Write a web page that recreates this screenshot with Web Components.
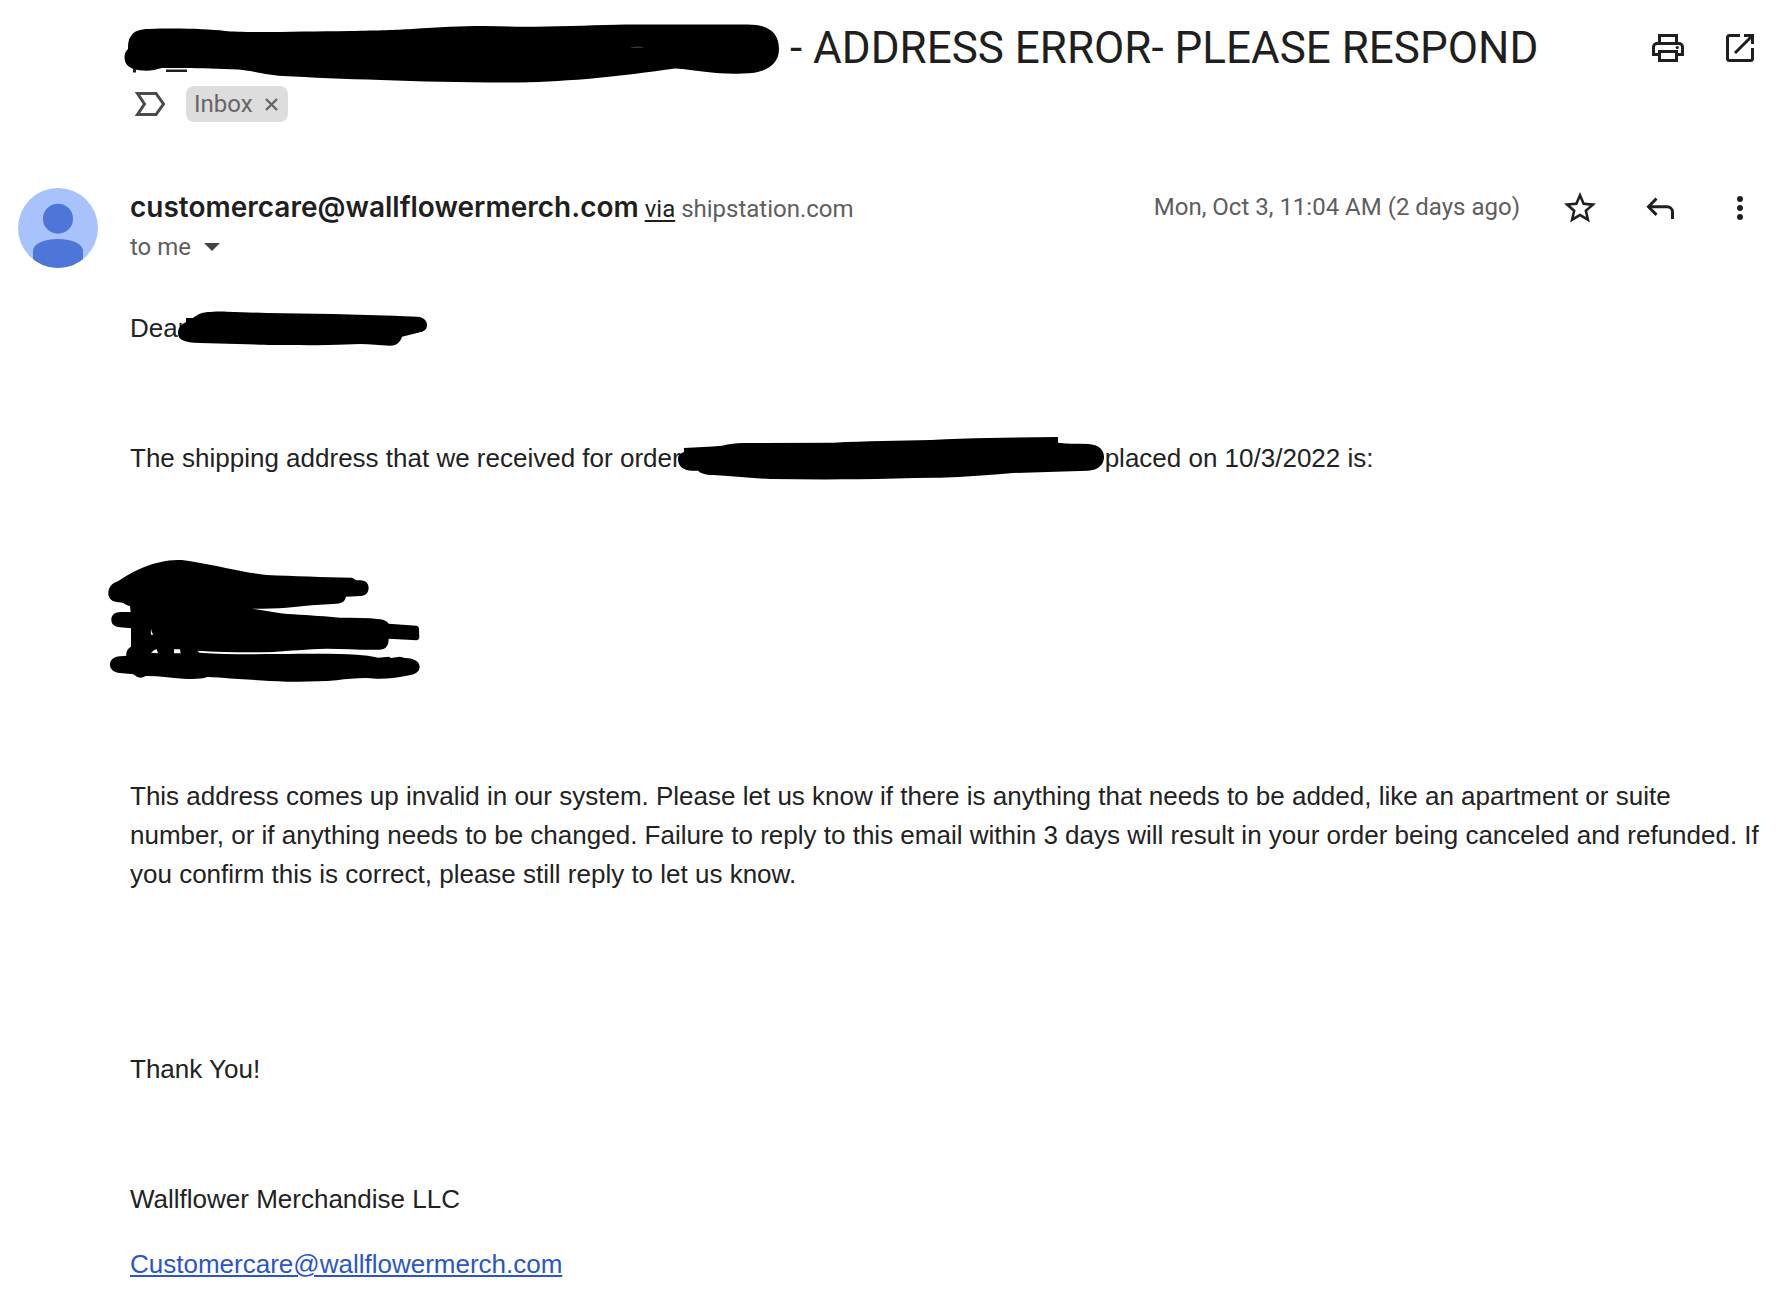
<!DOCTYPE html>
<html lang="en">
<head>
    <meta charset="utf-8">
    <meta name="viewport" content="width=device-width, initial-scale=1">
    <title>ADDRESS ERROR- PLEASE RESPOND</title>
    <style>
        body {
            margin: 0;
            background: #fff;
            color: #1f1f1f;
            font-family: Roboto, sans-serif;
        }
    </style>
</head>
<body>
    <mail-message>
        <mail-subject slot="subject">
            <redaction-mark shape="subject"></redaction-mark>- ADDRESS ERROR- PLEASE RESPOND
            <icon-button slot="actions" icon="print" label="Print all"></icon-button>
            <icon-button slot="actions" icon="open" label="In new window"></icon-button>
            <mail-label slot="labels">Inbox</mail-label>
        </mail-subject>

        <mail-sender slot="sender">
            <span slot="name">customercare@wallflowermerch.com</span>
            <span slot="domain">shipstation.com</span>
            <span slot="date">Mon, Oct 3, 11:04 AM (2 days ago)</span>
            <icon-button slot="actions" icon="star" label="Not starred"></icon-button>
            <icon-button slot="actions" icon="reply" label="Reply"></icon-button>
            <icon-button slot="actions" icon="more" label="More"></icon-button>
        </mail-sender>

        <mail-body></mail-body>
    </mail-message>

    <script>
        const ICONS = {
            print: `<g fill="none" stroke="currentColor" stroke-width="3">
                    <path d="M11.5 15V7.5h17V15"/>
                    <path d="M11.5 26.5h-6V19a3.5 3.5 0 0 1 3.5-3.5h22a3.5 3.5 0 0 1 3.5 3.5v7.5h-6"/>
                    <path d="M11.5 23.5h17v9h-17z"/>
                </g>
                <circle cx="29.3" cy="19.5" r="1.6"/>`,
            open: `<g fill="none" stroke="currentColor" stroke-width="3">
                    <path d="M20 7.5H9.5a2 2 0 0 0-2 2v21a2 2 0 0 0 2 2h21a2 2 0 0 0 2-2V20"/>
                    <path d="M24 7.5h8.5V16"/>
                    <path d="M15 25 32 8"/>
                </g>`,
            star: `<path transform="translate(.8 .8) scale(1.6)" d="M22 9.24l-7.19-.62L12 2 9.19 8.63 2 9.24l5.46 4.73L5.82 21 12 17.27 18.18 21l-1.63-7.03L22 9.24zM12 15.4l-3.76 2.27 1-4.28-3.32-2.88 4.38-.38L12 6.1l1.71 4.04 4.38.38-3.32 2.88 1 4.28L12 15.4z"/>`,
            reply: `<g fill="none" stroke="currentColor" stroke-width="3">
                    <path d="M16.5 10.5l-8 8.2 8 8.2"/>
                    <path d="M8.5 18.7h18.5a5.5 5.5 0 0 1 5.5 5.5V31"/>
                </g>`,
            more: `<circle cx="20" cy="11" r="3"/><circle cx="20" cy="20" r="3"/><circle cx="20" cy="29" r="3"/>`
        };

        // Marker strokes. origin is the pen position on the text baseline,
        // width is the room the stroke takes up in the line.
        const STROKES = {
            subject: {
                origin: [130, 63],
                width: 660,
                paths: `<path d="M131 36C134 31 140 29 149 29C180 28 207 29 225 31C245 33 300 31.500 350 31C380 30.500 395 30 412 29C440 27 460 26 484 26C505 26.500 525 27 546 26.500C580 26 610 24.500 636 24.500H747C768 24.500 779 32 779 49C779 65 765 73.500 743 73.500C730 74 719 73.500 707 72C695 71 685 69 675 68.500C650 72 620 76 587 79C560 81 535 82.500 506 82.500C460 82.500 420 81.500 381 80C345 79 310 77.500 283 76C265 75 255 71 238 69.500C220 68.500 200 68.500 185 68H162C155 70 150 71 142 70.500C130 70 124.500 65 124.500 57C124.500 53 126 51 128 49C128 43 128.500 39 131 36Z"/>
                    <path fill="#1f1f1f" d="M166 69.500h21v2.500h-21zM133 69h3v3.500h-3z"/>
                    <path fill="#444" d="M631 47.200q6-1 12-.3v.8q-6 .3-12 0z"/>`
            },
            greeting: {
                origin: [186, 337],
                width: 240,
                paths: `<path d="M178 333C178 328 181 325 186 322V318H193C198 314 203 312 210 312C217 311.500 222 311.500 227 311.700L267 313L333 314L393 315.700L417 316.700C424 317 427 321 427 325C427 330 423 332 418 332.700L402 336.700C400 343 396 345.700 390 345.700C380 345.500 370 344 360 344C340 345 320 345.500 300 345C285 345 270 345 260 344.700L200 343C192 343 186 342 182 340C179 338 178 336 178 333Z"/>`
            },
            order: {
                origin: [681, 468],
                width: 424,
                paths: `<path d="M678 460C678 456 681 454 684 453V449C697 448 710 448 722 446.700C730 445 736 444 742 444L834 443.700C865 442 900 441.500 931 441C950 440 970 439 989 439L1058 438V443.700C1068 445 1078 444.500 1088 445C1099 445.500 1104 451 1104 458C1104 466 1098 471 1088 471.700L1013 474C990 476 965 478 940 478.700C912 478.500 885 480 858 480.300C830 480.500 800 480.500 771 480C750 479 730 477 713 476C705 476 700 474 698 471.700H692C683 471.700 678 467 678 460Z"/>`
            },
            // three crossed-out address lines
            address: {
                origin: [130, 597],
                width: 290,
                paths: `<g transform="translate(90 540) scale(.3333)">
                    <path d="M55 160C55 142 65 130 85 123C125 97 165 76 210 67C245 58 275 58 310 65C390 78 460 97 530 105C610 108 700 112 785 113Q793 115 798 121H812C828 121 836 132 836 144C836 157 828 168 812 168L768 170C766 183 757 190 740 191C690 193 640 198 590 203C560 205 520 206 485 206C530 212 560 220 610 223C660 226 710 230 750 233C790 234 830 232 870 238C885 240 892 245 896 251L980 257Q987 258 987 266L988 293Q987 300 980 301L896 296C896 315 890 327 870 329C820 331 770 326 710 326C650 328 600 332 550 336C470 338 390 336 322 332L328 338C400 343 480 343 560 342C660 341 740 340 800 344Q835 346 865 353L897 350 903 354 930 350 945 354C975 355 989 366 989 381C989 397 973 404 950 407C920 413 890 417 860 416C820 412 780 416 740 421C690 425 640 426 590 425C500 422 420 414 352 411C335 417 310 418 280 416C240 414 200 407 167 408Q148 420 130 403L90 399C70 397 60 387 60 374C60 360 72 349 90 349L109 347C107 335 114 325 123 320V265L90 262C73 260 64 252 64 239C64 225 75 216 92 216H122L120 199Q110 196 98 188L80 186C63 184 55 174 55 160Z"/>
                    <path fill="#fff" d="M183 266q-1 10 0 18h7q-6-8-7-18zM183 338q8-8 17-11l4 13zM252 328h18l2 12h-20z"/>
                </g>`
            }
        };

        class IconButton extends HTMLElement {
            connectedCallback() {
                this.attachShadow({ mode: 'open' });
                this.shadowRoot.innerHTML = `
                    <style>
                        :host {
                            display: block;
                            flex: none;
                        }

                        button {
                            display: block;
                            width: 40px;
                            height: 40px;
                            padding: 0;
                            border: 0;
                            background: none;
                            color: inherit;
                            cursor: pointer;
                        }

                        svg {
                            display: block;
                            fill: currentColor;
                        }
                    </style>
                    <button type="button" aria-label="${this.getAttribute('label')}">
                        <svg width="40" height="40" viewBox="0 0 40 40" aria-hidden="true">${ICONS[this.getAttribute('icon')]}</svg>
                    </button>
                `;
            }
        }

        class RedactionMark extends HTMLElement {
            connectedCallback() {
                const stroke = STROKES[this.getAttribute('shape')];
                const [x, y] = stroke.origin;
                this.attachShadow({ mode: 'open' });
                this.shadowRoot.innerHTML = `
                    <style>
                        :host {
                            display: inline-block;
                            position: relative;
                            width: ${stroke.width}px;
                            height: 0;
                        }

                        svg {
                            position: absolute;
                            top: 0;
                            left: 0;
                            overflow: visible;
                            fill: #000;
                        }
                    </style>
                    <svg width="1" height="1" aria-hidden="true">
                        <g transform="translate(${-x} ${-y})">${stroke.paths}</g>
                    </svg>
                `;
            }
        }

        class MailLabel extends HTMLElement {
            connectedCallback() {
                this.attachShadow({ mode: 'open' });
                this.shadowRoot.innerHTML = `
                    <style>
                        :host {
                            display: flex;
                            align-items: center;
                            gap: 12px;
                            height: 36px;
                            padding: 0 9px 0 8px;
                            border-radius: 8px;
                            background: #ddd;
                            color: #666;
                            font-size: 24px;
                            line-height: 36px;
                        }

                        button {
                            display: block;
                            padding: 0;
                            border: 0;
                            background: none;
                            color: inherit;
                            cursor: pointer;
                        }

                        svg {
                            display: block;
                        }
                    </style>
                    <slot></slot>
                    <button type="button" aria-label="Remove label">
                        <svg width="14" height="14" viewBox="0 0 14 14" fill="none" stroke="currentColor" stroke-width="2.4" aria-hidden="true">
                            <path d="M1 2l11 11M12 2L1 13"/>
                        </svg>
                    </button>
                `;
            }
        }

        class MailSubject extends HTMLElement {
            connectedCallback() {
                this.attachShadow({ mode: 'open' });
                this.shadowRoot.innerHTML = `
                    <style>
                        :host {
                            display: block;
                            padding: 20px 26px 0 130px;
                        }

                        .top {
                            display: flex;
                            align-items: center;
                            justify-content: space-between;
                        }

                        h1 {
                            margin: 0;
                            font-size: 44px;
                            font-weight: 400;
                            line-height: 56px;
                        }

                        .actions {
                            display: flex;
                            gap: 32px;
                        }

                        .labels {
                            display: flex;
                            align-items: center;
                            gap: 16px;
                            padding: 10px 0 0;
                        }

                        .marker {
                            display: block;
                        }
                    </style>
                    <div class="top">
                        <h1><slot></slot></h1>
                        <div class="actions"><slot name="actions"></slot></div>
                    </div>
                    <div class="labels">
                        <svg class="marker" width="40" height="36" viewBox="0 0 40 36" fill="none" stroke="#4a4a4a" stroke-width="3" aria-hidden="true">
                            <path d="M7.500 7.500H26L33.500 18 26 28.500H7.500L14.500 18z"/>
                        </svg>
                        <slot name="labels"></slot>
                    </div>
                `;
            }
        }

        class MailSender extends HTMLElement {
            connectedCallback() {
                this.attachShadow({ mode: 'open' });
                this.shadowRoot.innerHTML = `
                    <style>
                        :host {
                            display: flex;
                            gap: 32px;
                            padding: 66px 26px 0 18px;
                            color: #5e5e5e;
                            font-size: 24px;
                            line-height: 38px;
                        }

                        .avatar {
                            display: block;
                            flex: none;
                        }

                        .details {
                            flex: 1;
                        }

                        .row {
                            display: flex;
                            align-items: flex-start;
                            justify-content: space-between;
                        }

                        h3 {
                            display: inline;
                            margin: 0;
                            color: #1f1f1f;
                            font: 600 28px/38px Inter, sans-serif;
                        }

                        a {
                            color: #1f1f1f;
                            text-underline-offset: 3px;
                        }

                        .side {
                            display: flex;
                            gap: 40px;
                            color: #1f1f1f;
                        }

                        .date {
                            color: #5e5e5e;
                        }

                        .to {
                            display: flex;
                            align-items: center;
                            gap: 13px;
                            padding: 0;
                            border: 0;
                            background: none;
                            color: inherit;
                            font: inherit;
                            cursor: pointer;
                        }
                    </style>
                    <svg class="avatar" width="80" height="80" viewBox="0 0 80 80" aria-hidden="true">
                        <clipPath id="round"><circle cx="40" cy="40" r="40"/></clipPath>
                        <g clip-path="url(#round)">
                            <path fill="#a8c2fb" d="M0 0h80v80H0z"/>
                            <circle cx="40" cy="30.700" r="15" fill="#4e75d8"/>
                            <path fill="#4e75d8" d="M15 80V63C15 56 25 51 40 51s25 5 25 12v17z"/>
                        </g>
                    </svg>
                    <div class="details">
                        <div class="row">
                            <div>
                                <h3><slot name="name"></slot></h3>
                                <a href="#via">via</a>
                                <slot name="domain"></slot>
                            </div>
                            <div class="side">
                                <span class="date"><slot name="date"></slot></span>
                                <slot name="actions"></slot>
                            </div>
                        </div>
                        <button class="to" type="button">
                            to me
                            <svg width="16" height="8" viewBox="0 0 16 8" fill="#444" aria-hidden="true"><path d="M0 0h16L8 8z"/></svg>
                        </button>
                    </div>
                `;
            }
        }

        class MailBody extends HTMLElement {
            connectedCallback() {
                this.attachShadow({ mode: 'open' });
                this.shadowRoot.innerHTML = `
                    <style>
                        :host {
                            display: block;
                            padding: 41px 16px 0 130px;
                            color: #222;
                            font-family: "Liberation Sans", Arial, sans-serif;
                            font-size: 26px;
                            line-height: 39px;
                        }

                        p {
                            margin: 0 0 26px;
                        }

                        p:last-child {
                            margin-bottom: 0;
                        }

                        a {
                            color: #2a56c6;
                        }
                    </style>
                    <p>Dear<redaction-mark shape="greeting"></redaction-mark></p>
                    <p>&nbsp;</p>
                    <p>The shipping address that we received for order<redaction-mark shape="order"></redaction-mark>placed on 10/3/2022 is:</p>
                    <p>&nbsp;</p>
                    <p><redaction-mark shape="address"></redaction-mark><br>&nbsp;<br>&nbsp;</p>
                    <p>&nbsp;</p>
                    <p>This address comes up invalid in our system. Please let us know if there is anything that needs to be added, like an apartment or suite number, or if anything needs to be changed. Failure to reply to this email within 3 days will result in your order being canceled and refunded. If you confirm this is correct, please still reply to let us know.</p>
                    <p>&nbsp;</p>
                    <p>&nbsp;</p>
                    <p>Thank You!</p>
                    <p>&nbsp;</p>
                    <p>Wallflower Merchandise LLC</p>
                    <p><a href="mailto:Customercare@wallflowermerch.com">Customercare@wallflowermerch.com</a></p>
                `;
            }
        }

        class MailMessage extends HTMLElement {
            connectedCallback() {
                this.attachShadow({ mode: 'open' });
                this.shadowRoot.innerHTML = `
                    <style>
                        :host {
                            display: block;
                        }
                    </style>
                    <slot name="subject"></slot>
                    <slot name="sender"></slot>
                    <slot></slot>
                `;
            }
        }

        customElements.define('icon-button', IconButton);
        customElements.define('redaction-mark', RedactionMark);
        customElements.define('mail-label', MailLabel);
        customElements.define('mail-subject', MailSubject);
        customElements.define('mail-sender', MailSender);
        customElements.define('mail-body', MailBody);
        customElements.define('mail-message', MailMessage);
    </script>
</body>
</html>
